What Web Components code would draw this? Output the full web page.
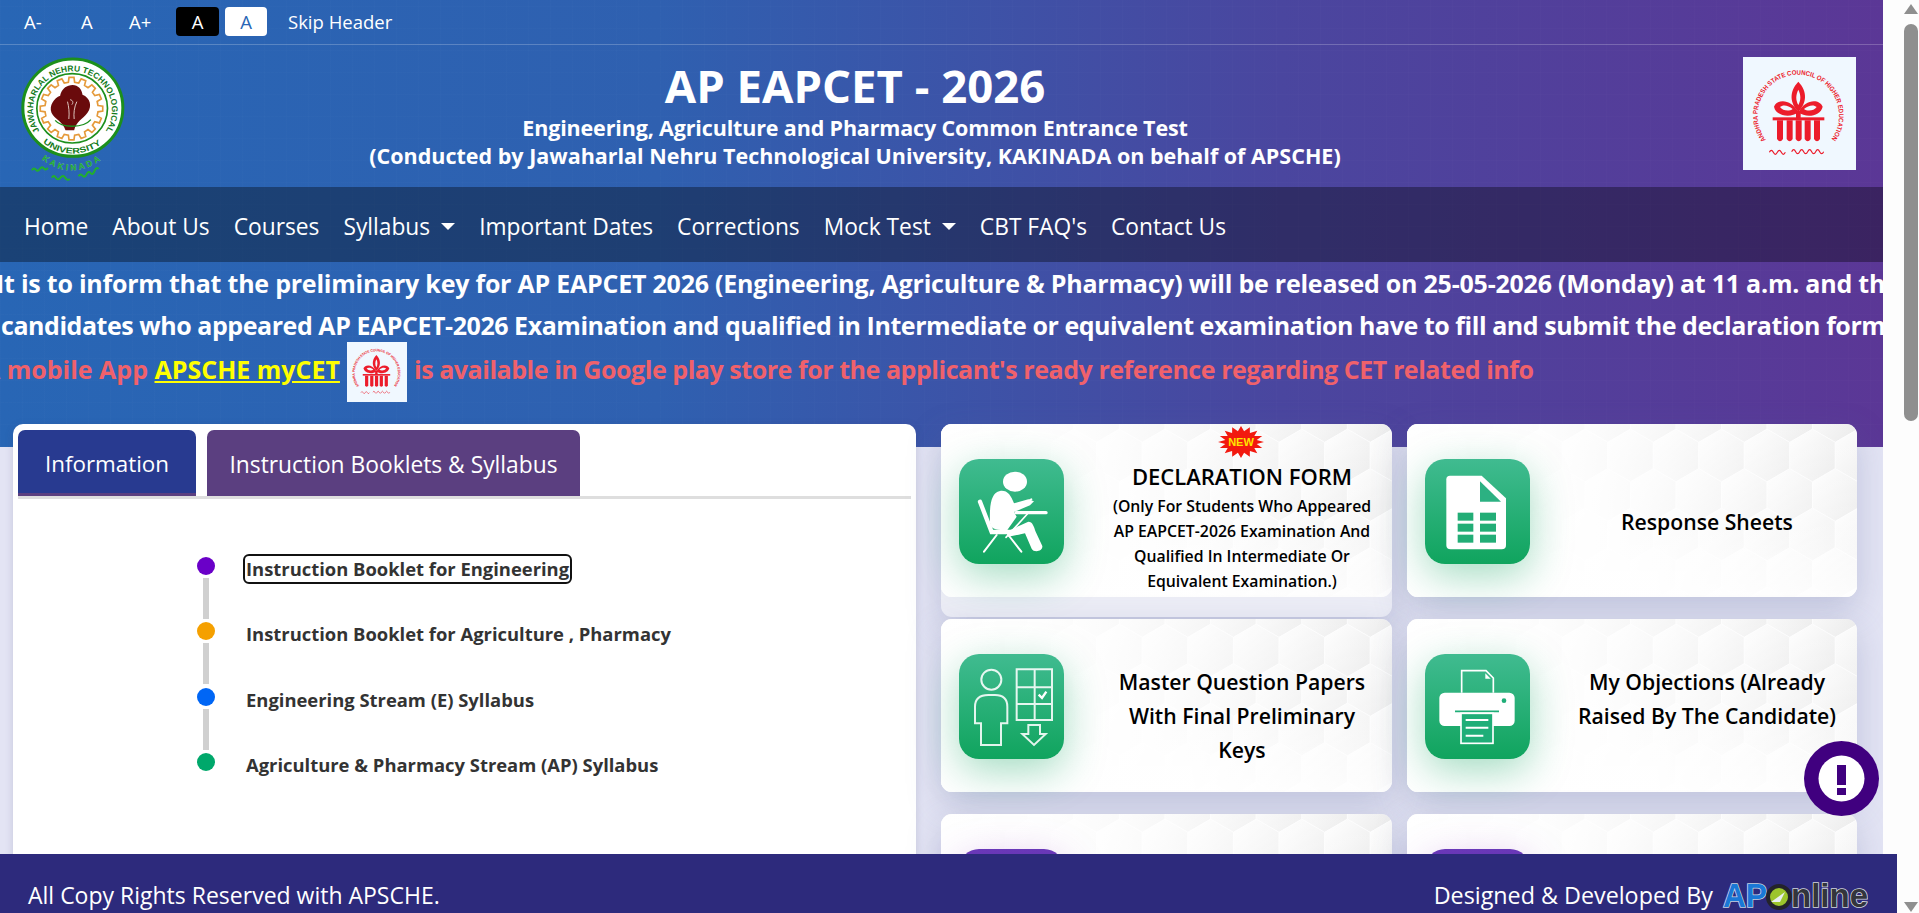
<!DOCTYPE html>
<html lang="en">
<head>
<meta charset="UTF-8">
<title>AP EAPCET - 2026</title>
<style>
    html, body { margin: 0; height: 100%; overflow: hidden; background: #fdfdfd; }
    body { font-family: "Open Sans", "Noto Sans", sans-serif; display: flex; width: 1919px; height: 913px; }
</style>
</head>
<body>
<main-page>
    <hero-band>
        <a11y-bar></a11y-bar>
        <site-header></site-header>
        <site-nav></site-nav>
        <news-ticker></news-ticker>
    </hero-band>
    <content-row>
        <info-panel slot="left"></info-panel>
        <tile-card slot="right" icon="chair" offset="decl" badge>
            <div style="font-size:22px;line-height:35px">DECLARATION FORM</div>
            <div style="font-size:15.8px;line-height:25px">(Only For Students Who Appeared<br>AP EAPCET-2026 Examination And<br>Qualified In Intermediate Or<br>Equivalent Examination.)</div>
        </tile-card>
        <tile-card slot="right" icon="sheet" offset="low">Response Sheets</tile-card>
        <tile-card slot="right" icon="master">Master Question Papers<br>With Final Preliminary<br>Keys</tile-card>
        <tile-card slot="right" icon="printer">My Objections (Already<br>Raised By The Candidate)</tile-card>
        <tile-card slot="right" icon="none" tone="purple"></tile-card>
        <tile-card slot="right" icon="none" tone="purple"></tile-card>
    </content-row>
</main-page>
<fake-scrollbar></fake-scrollbar>
<help-fab></help-fab>
<site-footer></site-footer>

<script>
    // small helper, every element just stamps its own markup in an open shadow root
    class Base extends HTMLElement {
        constructor() {
            super();
            this.attachShadow({mode: 'open'}).innerHTML = this.markup();
        }
        markup() { return ''; }
    }

    customElements.define('main-page', class extends Base {
        markup() { return `<style>
            :host { display: block; width: 1883px; height: 913px; overflow: hidden; background: #e3e4f4; flex: none; }
        </style><slot></slot>`; }
    });

    customElements.define('hero-band', class extends Base {
        markup() { return `<style>
            :host { display: block; height: 447px;
                background:
                    repeating-linear-gradient(90deg, rgba(255,255,255,.012) 0 1px, transparent 1px 22px),
                    repeating-linear-gradient(0deg, rgba(255,255,255,.012) 0 1px, transparent 1px 22px),
                    linear-gradient(90deg, #2866b5 0%, #2f60b0 35%, #4a469f 68%, #5b3796 100%); }
        </style><slot></slot>`; }
    });

    customElements.define('a11y-bar', class extends Base {
        markup() { return `<style>
            :host { display: flex; align-items: center; height: 45px; box-sizing: border-box; padding-bottom: 2px;
                border-bottom: 1px solid rgba(255,255,255,.22); color: #fff; font-size: 18.5px; padding-left: 24px; }
            span { display: block; }
            .box { width: 43px; height: 29px; line-height: 29px; text-align: center; border-radius: 4px; margin-right: 6px; }
            .dark { background: #000; }
            .light { background: #fff; color: #2866b5; width: 42px; margin-right: 21px; }
        </style>
        <span style="width:57px">A-</span><span style="width:48px">A</span><span style="width:47px">A+</span>
        <span class="box dark">A</span><span class="box light">A</span><span>Skip Header</span>`; }
    });

    customElements.define('jntu-logo', class extends Base {
        markup() {
            // gear outline, 16 teeth
            let gear = [];
            for (let i = 0; i < 16; i++) {
                const a = i * Math.PI / 8, step = Math.PI / 8;
                [[-.3, 80], [-.2, 94], [.2, 94], [.3, 80]].forEach(([f, r]) => {
                    gear.push(`${(214 + Math.cos(a + f * step) * r).toFixed(1)},${(205 + Math.sin(a + f * step) * r).toFixed(1)}`);
                });
            }
            return `<style>:host { display: block; width: 107px; height: 130px; } svg { display: block; }</style>
            <svg width="107" height="130" viewBox="60 50 320 390" font-family="Liberation Sans, sans-serif" font-weight="700">
                <defs>
                    <path id="top" d="M118 272 A118 116 0 1 1 316 272"/>
                    <path id="bot" d="M103 278 A136 132 0 0 0 333 278"/>
                    <path id="kak" d="M118 352 Q218 432 320 345"/>
                </defs>
                <ellipse cx="218" cy="202" rx="150" ry="146" fill="#fff" stroke="#1c8f1c" stroke-width="9"/>
                <text font-size="25" fill="#127a1a"><textPath href="#top" textLength="500" lengthAdjust="spacingAndGlyphs">JAWAHARLAL NEHRU TECHNOLOGICAL</textPath></text>
                <text font-size="24" fill="#127a1a"><textPath href="#bot" startOffset="14%" textLength="190" lengthAdjust="spacingAndGlyphs">UNIVERSITY</textPath></text>
                <ellipse cx="216" cy="204" rx="106" ry="104" fill="none" stroke="#1c8f1c" stroke-width="5"/>
                <polygon points="${gear.join(' ')}" fill="#fff" stroke="#e59a3a" stroke-width="5"/>
                <path d="M205 136 C228 128 245 143 247 163 C270 172 277 197 262 217 C248 237 228 242 222 270 L196 270 C188 242 163 237 154 217 C146 195 162 173 180 166 C183 152 190 141 205 136Z" fill="#6a0b0c"/>
                <path d="M210 178 C219 180 220 188 215 193 M202 184 C206 200 208 215 206 236 M230 184 C222 200 220 220 222 236" fill="none" stroke="#dcc4bc" stroke-width="3"/>
                <path d="M165 240 C185 264 250 264 272 238" fill="none" stroke="#1c8f1c" stroke-width="4"/>
                <text font-size="25" fill="#22b02c" stroke="#9fd8a0" stroke-width=".8" paint-order="stroke"><textPath href="#kak" startOffset="4%" textLength="190">KAKINADA</textPath></text>
                <path d="M95 390 q6 -10 12 -2 t12 -2 t12 -2 t12 -2 M155 412 q6 -10 12 0 t14 0 t14 0 t14 4 M235 408 q6 -10 12 -2 t12 -4 t12 -4 t12 -6 t12 -6" fill="none" stroke="#22b02c" stroke-width="6"/>
            </svg>`;
        }
    });

    customElements.define('apsche-logo', class extends Base {
        markup() {
            const cols = [111, 140, 167, 194, 222].map(x => `<path d="M${x} 196 h18 v56 q-9 14 -18 0Z"/>`).join('');
            return `<style>:host { display: block; width: var(--size, 113px); height: var(--size, 113px); flex: none; background: #f0f8ff; } svg { display: block; width: 100%; height: 100%; }</style>
            <svg viewBox="9 6 339 339" font-family="Liberation Sans, sans-serif" font-weight="700" fill="#ec1c2b">
                <defs><path id="arc" d="M78 255 A122 122 0 1 1 272 255"/></defs>
                <text font-size="20"><textPath href="#arc" textLength="538" lengthAdjust="spacingAndGlyphs">ANDHRA PRADESH STATE COUNCIL OF HIGHER EDUCATION</textPath></text>
                <path d="M175 80 C146 110 150 145 175 170 C200 145 204 110 175 80Z M175 104 C167 120 167 135 175 150 C183 135 183 120 175 104Z" fill-rule="evenodd"/>
                <path d="M175 172 C155 132 112 130 102 155 C108 184 152 190 175 172Z M158 162 C145 150 128 148 120 156 C128 168 148 170 158 162Z" fill-rule="evenodd"/>
                <path d="M175 172 C195 132 238 130 248 155 C242 184 198 190 175 172Z M192 162 C205 150 222 148 230 156 C222 168 202 170 192 162Z" fill-rule="evenodd"/>
                <rect x="168" y="168" width="14" height="22"/>
                <rect x="98" y="187" width="155" height="9"/>
                ${cols}
                <path d="M88 292 q6 -12 12 0 t12 0 t12 0 t12 0 M155 290 q6 -12 12 0 t12 0 t12 0 t12 0 t12 0 t12 0 t12 0 t12 0" fill="none" stroke="#ec1c2b" stroke-width="3.5"/>
            </svg>`;
        }
    });

    customElements.define('site-header', class extends Base {
        markup() { return `<style>
            :host { display: flex; height: 142px; padding-left: 20px; padding-right: 27px; box-sizing: border-box; color: #fff; padding-top: 12px; }
            jntu-logo { flex: none; }
            .mid { flex: none; width: 1456px; text-align: center; font-weight: 700; }
            h1 { margin: 0; font-size: 45.5px; line-height: 57px; font-weight: 700; }
            p { margin: 0; font-size: 21.5px; line-height: 28px; white-space: nowrap; }
            p.tight { letter-spacing: -.15px; }
            apsche-logo { margin-left: auto; }
        </style>
        <jntu-logo></jntu-logo>
        <div class="mid">
            <h1>AP EAPCET - 2026</h1>
            <p class="tight">Engineering, Agriculture and Pharmacy Common Entrance Test</p>
            <p>(Conducted by Jawaharlal Nehru Technological University, KAKINADA on behalf of APSCHE)</p>
        </div>
        <apsche-logo></apsche-logo>`; }
    });

    customElements.define('site-nav', class extends Base {
        markup() {
            const items = [['Home'], ['About Us'], ['Courses'], ['Syllabus', 1], ['Important Dates'], ['Corrections'], ['Mock Test', 1], ["CBT FAQ's"], ['Contact Us']];
            return `<style>
                :host { display: flex; align-items: center; height: 75px; box-sizing: border-box; padding-top: 3px; background: rgba(0,0,0,.35); color: #fff;
                    font-size: 22.75px; padding-left: 12px; }
                a { display: flex; align-items: center; padding: 0 12px; white-space: nowrap; }
                i { display: block; width: 0; height: 0; margin-left: 11px; border: 7px solid transparent; border-top-color: #fff; border-bottom: 0; }
            </style>` + items.map(([t, caret]) => `<a>${t}${caret ? '<i></i>' : ''}</a>`).join('');
        }
    });

    customElements.define('news-ticker', class extends Base {
        markup() { return `<style>
            :host { display: block; height: 185px; overflow: hidden; font-weight: 700; font-size: 25px; letter-spacing: -.45px; color: #fff; white-space: nowrap; }
            div { height: 42px; line-height: 42px; }
            .one { margin-left: -4px; letter-spacing: -.23px; }
            .two { margin-left: 1px; }
            .three { display: flex; align-items: center; height: 60px; margin-top: -4px; margin-left: -17px; color: #f0616b; gap: 7px; }
            .three span { padding-bottom: 6px; }
            .three span:first-child { letter-spacing: 0; }
            a { color: #ff0; text-decoration: underline; letter-spacing: 0; }
            apsche-logo { --size: 60px; }
        </style>
        <div class="one">It is to inform that the preliminary key for AP EAPCET 2026 (Engineering, Agriculture &amp; Pharmacy) will be released on 25-05-2026 (Monday) at 11 a.m. and the</div>
        <div class="two">candidates who appeared AP EAPCET-2026 Examination and qualified in Intermediate or equivalent examination have to fill and submit the declaration form</div>
        <div class="three"><span>A mobile App <a>APSCHE myCET</a></span><apsche-logo></apsche-logo><span>is available in Google play store for the applicant's ready reference regarding CET related info</span></div>`; }
    });

    customElements.define('content-row', class extends Base {
        markup() { return `<style>
            :host { display: flex; margin-top: -23px; padding-left: 13px; height: 489px; position: relative; }
            .left { flex: none; width: 903px; margin-right: 25px; }
            .right { flex: none; width: 916px; display: grid; grid-template-columns: 451px 450px; column-gap: 15px; align-content: start; }
        </style>
        <div class="left"><slot name="left"></slot></div>
        <div class="right"><slot name="right"></slot></div>`; }
    });

    customElements.define('info-panel', class extends Base {
        markup() { return `<style>
            :host { display: block; background: #fff; border-radius: 10px 10px 0 0; height: 489px; padding: 6px 5px 0; box-sizing: border-box;
                box-shadow: 0 2px 8px rgba(60,60,110,.18); }
            .tabs { display: flex; gap: 11px; border-bottom: 3px solid #dedede; height: 66px; }
            .tab { display: flex; align-items: center; justify-content: center; color: #fff; font-size: 22.4px; border-radius: 7px 7px 0 0; height: 66px; padding-top: 2px; box-sizing: border-box; }
            .a { width: 178px; background: #283a90; border-bottom: 3px solid #5b3f80; padding-top: 4px; }
            .b { width: 373px; background: #5b3f80; font-size: 22.8px; }
            ul { list-style: none; margin: 58px 0 0 179px; padding: 0; font-weight: 700; font-size: 18.4px; color: #333; }
            li { display: flex; height: 65.3px; }
            .rail { flex: none; width: 18px; display: flex; flex-direction: column; align-items: center; margin-right: 31px; }
            .dot { flex: none; width: 18px; height: 18px; border-radius: 50%; background: var(--c); }
            .line { width: 6px; height: 41px; margin-top: 3px; background: #d0d0d0; }
            a { line-height: 24px; height: 24px; white-space: nowrap; }
            a.focus { outline: 2.5px solid #111; outline-offset: 1px; border-radius: 3px; }
        </style>
        <div class="tabs"><div class="tab a">Information</div><div class="tab b">Instruction Booklets &amp; Syllabus</div></div>
        <ul>
            <li><div class="rail"><div class="dot" style="--c:#6a00c8"></div><div class="line"></div></div><a class="focus">Instruction Booklet for Engineering</a></li>
            <li><div class="rail"><div class="dot" style="--c:#f5a000"></div><div class="line"></div></div><a>Instruction Booklet for Agriculture , Pharmacy</a></li>
            <li><div class="rail"><div class="dot" style="--c:#0066f5"></div><div class="line"></div></div><a>Engineering Stream (E) Syllabus</a></li>
            <li><div class="rail"><div class="dot" style="--c:#00a86b"></div></div><a>Agriculture &amp; Pharmacy Stream (AP) Syllabus</a></li>
        </ul>`; }
    });

    // the white glyphs of the tiles, drawn in the coordinates of the zoomed reference
    const TILE_ICONS = {
        chair: `<svg viewBox="27 27 315 315" fill="#fff" stroke="none">
            <ellipse cx="195" cy="95" rx="36" ry="30"/>
            <path d="M150 123 C122 128 118 170 120 218 C121 236 140 242 172 240 L200 200 L192 186 L240 166 L252 154 L235 148 L192 160 C182 135 172 120 150 123Z"/>
            <path d="M168 246 L235 215 C248 215 252 230 257 245 L277 288 C279 306 250 308 245 296 L225 250 L175 260Z"/>
            <g stroke="#fff" fill="none" stroke-linecap="round">
                <path d="M198 188 H288" stroke-width="10"/>
                <path d="M232 192 L168 262" stroke-width="5"/>
                <path d="M90 155 L125 246 H208" stroke-width="13"/>
                <path d="M140 255 L102 305 M175 255 L214 305" stroke-width="6"/>
                <path d="M238 152 L244 148" stroke-width="6"/>
            </g></svg>`,
        sheet: `<svg viewBox="75 147 315 315">
            <path d="M150 197 H245 L318 265 V405 Q318 418 305 418 H152 Q139 418 139 405 V208 Q139 197 150 197Z" fill="#fff"/>
            <path d="M240 214 L303 275 H240Z" fill="#2cb182"/>
            <g fill="#22ad76">
                <rect x="173" y="308" width="47" height="24"/><rect x="240" y="308" width="48" height="24"/>
                <rect x="173" y="341" width="47" height="24"/><rect x="240" y="341" width="48" height="24"/>
                <rect x="173" y="374" width="47" height="24"/><rect x="240" y="374" width="48" height="24"/>
            </g></svg>`,
        master: `<svg viewBox="87 132 315 315" fill="none" stroke="#fff" stroke-opacity=".88" stroke-width="6">
            <circle cx="184" cy="209" r="30"/>
            <path d="M135 340 V290 Q135 255 175 255 H195 Q232 255 232 290 V340 H213 V405 H153 V340Z"/>
            <path d="M260 178 H366 V330 H260Z M314 178 V330 M260 232 H366 M260 282 H366"/>
            <path d="M326 254 L336 264 L349 245" stroke-width="7" stroke-opacity="1"/>
            <path d="M295 345 H330 V372 H347 L312 405 L277 372 H295Z"/></svg>`,
        printer: `<svg viewBox="75 132 315 315">
            <path d="M185 248 V182 H258 L280 204 V248" fill="none" stroke="#fff" stroke-width="5"/>
            <path d="M256 190 L272 206 H256Z" fill="#fff"/>
            <rect x="118" y="248" width="226" height="100" rx="16" fill="#fff"/>
            <circle cx="312" cy="272" r="7" fill="#1fae78"/>
            <path d="M165 304 H297" stroke="#1fae78" stroke-width="5"/>
            <rect x="183" y="310" width="96" height="90" fill="#1fae78" stroke="#fff" stroke-width="5"/>
            <path d="M197 330 H265 M197 353 H265 M197 377 H250" stroke="#fff" stroke-width="6"/></svg>`,
        none: ''
    };

    // hexagon cells for the tile background
    function hexCells() {
        const w = 45.6, r = 26.33;
        const hex = (cx, cy) => `<polygon fill="url(#cell)" stroke="#fff" stroke-opacity=".6" points="${cx},${cy - r} ${cx + w / 2},${cy - r / 2} ${cx + w / 2},${cy + r / 2} ${cx},${cy + r} ${cx - w / 2},${cy + r / 2} ${cx - w / 2},${cy - r / 2}"/>`;
        let out = '';
        for (let row = 0; row < 6; row++) {
            for (let col = 0; col < 11; col++) {
                out += hex(col * w + (row % 2 ? 0 : w / 2) - 4, row * 39.5 - 8);
            }
        }
        return out;
    }

    customElements.define('tile-card', class extends Base {
        markup() {
            const icon = TILE_ICONS[this.getAttribute('icon')] || '';
            const purple = this.getAttribute('tone') === 'purple';
            const top = {decl: 35, low: 81}[this.getAttribute('offset')] ?? 46;
            const isDecl = this.getAttribute('offset') === 'decl';
            let burst = '';
            if (this.hasAttribute('badge')) {
                let pts = [];
                for (let i = 0; i < 32; i++) {
                    const a = i * Math.PI / 16, big = i % 2 === 0;
                    pts.push(`${(23 + Math.cos(a) * (big ? 23 : 16)).toFixed(1)},${(16 + Math.sin(a) * (big ? 16 : 11)).toFixed(1)}`);
                }
                burst = `<svg class="burst" width="46" height="32"><polygon points="${pts.join(' ')}" fill="#f2190f"/><text x="23" y="20" text-anchor="middle" font-size="11" font-weight="700" fill="#ffe600" font-family="Liberation Sans, sans-serif">NEW</text></svg>`;
            }
            return `<style>
                :host { display: block; position: relative; height: ${isDecl ? 193 : 173}px; margin-bottom: ${isDecl ? 2 : 22}px;
                    background: #ecedf6; border-radius: 11px; box-shadow: 0 12px 34px rgba(90,100,150,.26); }
                .bg { position: absolute; left: 0; top: 0; width: 100%; height: 173px; border-radius: 11px; display: block; }
                .row { position: relative; display: flex; height: 100%; }
                .icon { flex: none; width: 105px; height: 105px; margin: 35px 0 0 18px; border-radius: 20px;
                    background: ${purple ? 'linear-gradient(#6a38b8,#5a2ca8)' : 'linear-gradient(#40bb90,#10a45e)'};
                    box-shadow: 0 12px 40px ${purple ? 'rgba(150,60,190,.34)' : 'rgba(16,164,94,.38)'}; }
                .icon svg { display: block; width: 105px; height: 105px; }
                .text { margin-left: auto; width: 300px; box-sizing: border-box; padding-top: ${top}px; text-align: center;
                    font-size: 21.2px; line-height: 34px; font-weight: 600; color: #000; position: relative; }
                .burst { position: absolute; left: 126px; top: 2px; }
            </style>
            <svg class="bg" preserveAspectRatio="none" viewBox="0 0 451 173" width="451" height="173">
                <defs>
                    <linearGradient id="cell" x1="0" x2="1" y1="0" y2="1"><stop offset="0" stop-color="#fff"/><stop offset="1" stop-color="#e9e9e9"/></linearGradient>
                    <linearGradient id="fade" x1="0" x2="1" y1=".35" y2="0"><stop offset=".08" stop-color="#fff"/><stop offset=".3" stop-color="#fff" stop-opacity=".92"/><stop offset="1" stop-color="#fff" stop-opacity="0"/></linearGradient>
                    <linearGradient id="low" x1="0" x2="0" y1="0" y2="1"><stop offset=".55" stop-color="#fff" stop-opacity="0"/><stop offset="1" stop-color="#fff" stop-opacity=".75"/></linearGradient>
                </defs>
                ${hexCells()}
                <rect width="451" height="173" fill="url(#fade)"/>
                <rect width="451" height="173" fill="url(#low)"/>
            </svg>
            <div class="row">
                <div class="icon">${icon}</div>
                <div class="text">${burst}<slot></slot></div>
            </div>`;
        }
    });

    customElements.define('fake-scrollbar', class extends Base {
        markup() { return `<style>
            :host { display: flex; flex-direction: column; align-items: center; width: 36px; height: 913px; box-sizing: border-box; padding: 4px 0 1px 20px; flex: none; }
            .up, .down { width: 0; height: 0; border: 7px solid transparent; }
            .up { border-bottom: 10px solid #8f8f8f; border-top: 0; }
            .down { border-top: 10px solid #8f8f8f; border-bottom: 0; margin-top: auto; }
            .thumb { width: 14px; height: 397px; margin-top: 10px; border-radius: 7px; background: #8f8f8f; }
        </style><div class="up"></div><div class="thumb"></div><div class="down"></div>`; }
    });

    customElements.define('help-fab', class extends Base {
        markup() { return `<style>
            :host { position: fixed; left: 1804px; top: 741px; width: 75px; height: 75px; z-index: 5; }
            svg { display: block; }
        </style>
        <svg width="75" height="75" viewBox="0 0 75 75">
            <circle cx="37.5" cy="37.5" r="37.5" fill="#40007f"/>
            <circle cx="37.5" cy="37.5" r="23" fill="#fff"/>
            <rect x="33" y="24" width="9" height="20" fill="#40007f"/>
            <rect x="33" y="47" width="9" height="7" fill="#40007f"/>
        </svg>`; }
    });

    customElements.define('site-footer', class extends Base {
        markup() { return `<style>
            :host { position: fixed; left: 0; bottom: 0; width: 1897px; height: 59px; background: #2d2a7c; color: #fff; z-index: 4;
                display: flex; align-items: center; font-size: 23px; padding: 0 29px 0 28px; box-sizing: border-box; overflow: hidden; }
            .credit { margin-left: auto; display: flex; align-items: center; gap: 9px; font-size: 23.3px; }
            span { padding-top: 22px; line-height: 34px; }
            svg { display: block; margin-top: 22px; }
        </style>
        <span>All Copy Rights Reserved with APSCHE.</span>
        <div class="credit"><span>Designed &amp; Developed By</span>
            <svg width="146" height="34" viewBox="0 0 146 34" font-family="Liberation Sans, sans-serif" font-weight="700">
                <text x="1" y="29" font-size="33" fill="#1a78d6" stroke="#c8d4e4" stroke-width="1.6" textLength="44" lengthAdjust="spacingAndGlyphs" paint-order="stroke">AP</text>
                <circle cx="57" cy="19" r="11" fill="#9cc52c" stroke="#23232b" stroke-width="4"/>
                <path d="M49 24 L63 14 L58 24 Z" fill="#e8eef0"/>
                <text x="69" y="29" font-size="33" fill="#33353c" stroke="#d4d8dc" stroke-width="1.6" textLength="77" lengthAdjust="spacingAndGlyphs" paint-order="stroke">nline</text>
            </svg>
        </div>`; }
    });
</script>
</body>
</html>
